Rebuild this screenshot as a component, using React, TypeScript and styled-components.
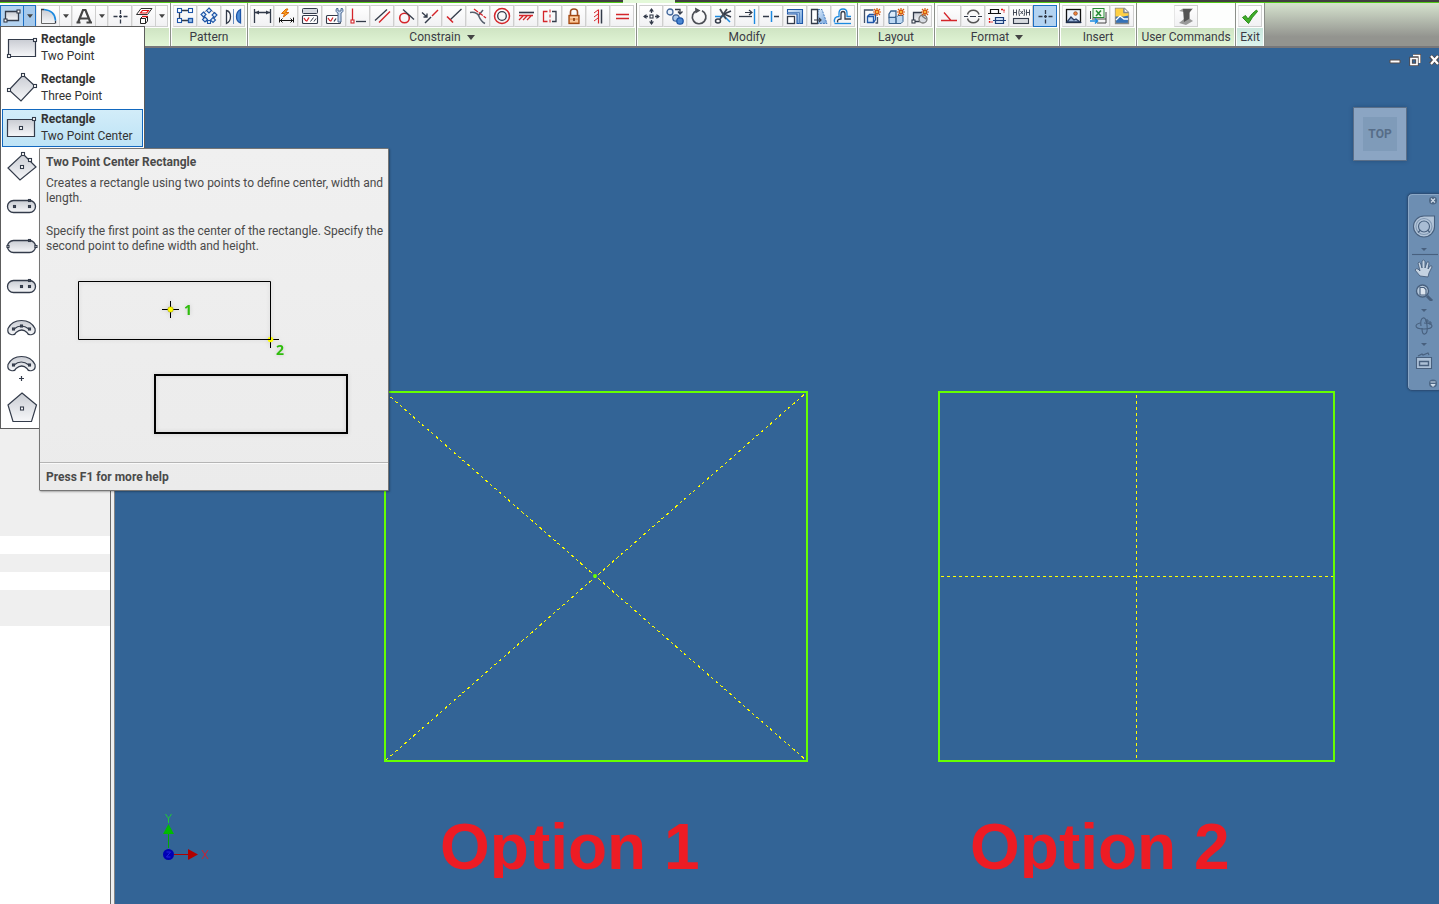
import React from 'react';
import styled, { createGlobalStyle, css } from 'styled-components';

const INK = '#333b4a';
const RED = '#d4252a';
const BLUE = '#1e56a8';
const SKY = '#1c8ae0';

const GlobalStyle = createGlobalStyle`
  * { box-sizing: border-box; }
  body { margin: 0; background: #336496; font-family: Roboto, "Open Sans", sans-serif; font-size: 12px; color: #333; }
  button { font: inherit; color: inherit; padding: 0; margin: 0; border: 0; background: none; cursor: pointer; }
  svg { display: block; }
`;

const Page = styled.div`
  display: flex;
  flex-direction: column;
  min-height: 100vh;
  overflow: hidden;
`;

/* ---------- ribbon ---------- */

const Ribbon = styled.header`
  position: relative;
  z-index: 2;
  background: linear-gradient(#dcead4, #93948f 80%);
  border-bottom: 2px solid #77777a;
`;

const TabStrip = styled.div`
  display: flex;
  height: 3px;
`;

const TabEdge = styled.div<{ $width?: number }>`
  flex: ${p => (p.$width ? `0 0 ${p.$width}px` : '1')};
  background: #41403f;
  border-bottom: 1px solid #52c818;
`;

const ActiveTab = styled.div`
  width: 52px;
  background: #e3f8d8;
`;

const Panels = styled.div`
  display: flex;
  height: 43px;
`;

const Panel = styled.section<{ $flush?: boolean }>`
  position: relative;
  display: flex;
  flex-direction: column;
  border-right: 1px solid #8b8f89;
  background: #fdfefd;
  ${p => p.$flush && css`
    & > div { padding-left: 0; }
  `}
`;

const Tools = styled.div`
  display: flex;
  justify-content: center;
  height: 25px;
  padding: 2px 2px 1px;
`;

const PanelTitle = styled.div<{ $exit?: boolean }>`
  display: flex;
  align-items: center;
  justify-content: center;
  gap: 6px;
  height: 18px;
  margin: 0 1px;
  line-height: 18px;
  white-space: nowrap;
  color: #3b3b45;
  background: ${p => (p.$exit ? 'linear-gradient(#c9e6dc, #dcf4ee)' : 'linear-gradient(#cfe4c3, #e2f6d6)')};
`;

const CommandsTitle = styled(PanelTitle)`
  width: 96px;
`;

const Tool = styled.button<{ $on?: boolean }>`
  width: 24px;
  height: 22px;
  flex: none;
  border: 1px solid ${p => (p.$on ? '#1c6fc4' : '#cfcfcf')};
  border-left-color: ${p => (p.$on ? '#1c6fc4' : '#e6e6e6')};
  background: ${p => (p.$on ? '#b3d3f1' : 'linear-gradient(#fff, #f1f1f3)')};
  svg { margin: -1px; }
`;

const SplitArrow = styled.button<{ $on?: boolean }>`
  display: grid;
  place-items: center;
  width: 12px;
  height: 22px;
  flex: none;
  border: 1px solid ${p => (p.$on ? '#1c6fc4' : '#cfcfcf')};
  border-left: 0;
  background: ${p => (p.$on ? '#a5c9ec' : 'linear-gradient(#fff, #f1f1f3)')};
`;

const Caret = ({ size = 6 }: { size?: number }) => (
  <svg width={size} height={size / 2 + 1} viewBox="0 0 8 5"><path d="M0 0h8L4 5z" fill="#444" /></svg>
);

const Icon = ({ children }: { children: React.ReactNode }) => (
  <svg width="24" height="22" viewBox="0 0 24 22" fill="none" stroke={INK} strokeWidth="1.3">{children}</svg>
);

const Dot = ({ x, y, c = INK, s = 3 }: { x: number; y: number; c?: string; s?: number }) => (
  <rect x={x - s / 2} y={y - s / 2} width={s} height={s} fill="#fff" stroke={c} strokeWidth="1.1" />
);

const Spark = ({ x = 17, y = 7 }: { x?: number; y?: number }) => (
  <g stroke="#d65a10" strokeWidth="1.2">
    <path d={`M${x - 4} ${y}h8M${x} ${y - 4}v8M${x - 3} ${y - 3}l6 6M${x + 3} ${y - 3}l-6 6`} />
    <circle cx={x} cy={y} r="1.6" fill="#ffd34d" />
  </g>
);

const Shade = () => (
  <svg width="0" height="0" style={{ position: 'absolute' }} aria-hidden="true">
    <defs>
      <linearGradient id="shade" x1="0" y1="0" x2="0" y2="1">
        <stop offset="0" stopColor="#c9ccd3" /><stop offset="1" stopColor="#f6f7f9" />
      </linearGradient>
      <linearGradient id="blue" x1="0" y1="0" x2="1" y2="1">
        <stop offset="0" stopColor="#dcebfa" /><stop offset="1" stopColor="#6fa2dc" />
      </linearGradient>
    </defs>
  </svg>
);

const crosshair = <path d="M5.5 11.5h4M11 11.5h3M15.5 11.5h4M12.5 5v4M12.5 10v3M12.5 14.5v4" />;

const rectangleIcon = <><path d="M5.5 15.5v-9h13v9z" fill="url(#shade)" /><Dot x={18.5} y={6.5} /><Dot x={5.5} y={15.5} /></>;
const filletIcon = <><path d="M5 4.500h3q11 1 11 14H5z" fill="url(#shade)" stroke="none" /><path d="M5.500 4v14.500H19" strokeWidth="1" stroke="#666" /><path d="M5 4.500h3M19.500 18.500v-3" /><path d="M8 4.500q11 1 11.500 11" stroke={SKY} strokeWidth="1.600" /></>;
const textIcon = <path d="M6 17.500L11 5h2.500l5 12.500M8.500 13.500h7.500M4.500 17.500h4M14.500 17.500h5.500" stroke="#444" strokeWidth="2.200" />;
const projectIcon = <><path d="M9 3.500h11l-4.500 6H4.500z" fill="#fff" stroke="#333" strokeWidth="1" /><path d="M10.500 5.500h6l-2 2.500H8.500z" stroke="#e01010" strokeWidth="1.200" /><path d="M8.500 13.500l2-2h5v4.500l-2 2.500h-5zM8.500 13.500h5v5M13.500 13.500l2-2" stroke="#222" strokeWidth="1" fill="#fff" /><path d="M10 11.500h5.500" stroke="#e01010" /></>;

const patternTools: [string, React.ReactNode][] = [
  ['Rectangular Pattern', <><path d="M8 5.500h9M8 15.500h9M6.500 8v6" /><Dot x={6.5} y={5.5} c={BLUE} s={4} /><Dot x={17.500} y={5.5} c={BLUE} s={4} /><Dot x={6.5} y={15.5} c={BLUE} s={4} /><rect x="15.500" y="13.500" width="4" height="4" fill="#9cc3ee" stroke={BLUE} /></>],
  ['Circular Pattern', <><circle cx="12" cy="11" r="6" stroke="#889" strokeWidth="1" /><g fill="#dcebfa" stroke={BLUE} strokeWidth="1.100"><path d="M12 3l2.500 2.500L12 8 9.500 5.500zM6.500 7L9 9.500 6.500 12 4 9.500zM17.500 7.500L20 10l-2.500 2.500L15 10zM8 12l2.500 2.500L8 17l-2.500-2.500zM16 12.500l2.500 2.500-2.500 2.500-2.500-2.500zM10.500 15.500h3v3h-3z" /></g></>],
  ['Mirror', <><path d="M5.500 5.500q4 1 4 6t-4 7z" fill="#fff" /><path d="M12.500 4v15" stroke="#6a8fc0" strokeWidth="1" /><path d="M19.500 4.500q-4 2-4 7t4 6.500z" fill="#4f8fd8" stroke={BLUE} /></>],
];

const constrainTools: [string, React.ReactNode][] = [
  ['Dimension', <><path d="M4.500 4v14M20.500 4v14M5 7.500h15" /><path d="M5 7.500l4-2v4zM20 7.500l-4-2v4z" fill={INK} stroke="none" /></>],
  ['Automatic Dimensions', <><path d="M12 4L7.500 8.500h3L9.500 12 15 7.500h-3.500L14 4z" fill="#ffa41c" stroke="#d9680c" strokeWidth="1" /><path d="M5.500 12.500v5M19.500 12.500v5M6 15.500h13M8.500 13.500l-2 2 2 2M16.500 13.500l2 2-2 2" stroke="#111" strokeWidth="1" /></>],
  ['Show Constraints', <><rect x="4.500" y="3.500" width="15" height="5" rx="1" fill="#d6dae1" strokeWidth="1" /><rect x="4.500" y="10.500" width="15" height="8" rx="1" fill="#fff" strokeWidth="1.100" /><path d="M6 13l2 3M11 12.500L8.500 16.500" stroke={RED} /><path d="M12.500 16.500l3-4M16 16.500l2-3" strokeWidth="1" /></>],
  ['Constraint Settings', <><rect x="4.500" y="10.500" width="14" height="8" rx="1" fill="#fff" strokeWidth="1.100" /><path d="M6 13l2 3M11 12.500L8.500 16.500" stroke={RED} /><path d="M12 16.500l2-3" /><path d="M16 17V8q-3-1-1.500-4.500h1.500V6h3V3.500h1.500Q22 7 19 8v9z" fill="#c5d7ed" stroke="#4c6a94" strokeWidth="1" /></>],
  ['Coincident', <><path d="M6.500 3.500V15" stroke={RED} /><path d="M10 16.500h10" /><Dot x={6.5} y={16.5} c={RED} /></>],
  ['Parallel', <><path d="M5 15.500L17 4.500" /><path d="M9 17.500L20 6.500" stroke={RED} strokeWidth="1.500" /></>],
  ['Tangent', <><circle cx="10.500" cy="13" r="4.800" stroke={RED} strokeWidth="1.600" /><path d="M9 4.500l11 10" /></>],
  ['Collinear', <><path d="M4 7.500l5 4.500M9 8.500V12H5.500" /><path d="M7 18l6-6" strokeWidth="1.500" /><path d="M14 11l6-6" stroke={RED} strokeWidth="1.500" /></>],
  ['Perpendicular', <><path d="M19.500 4L8 15" /><path d="M5 11.500l6 6" stroke={RED} strokeWidth="1.600" /></>],
  ['Smooth', <><path d="M4 7.500q7-1 9 4t6 7M13 10l4-5" stroke="#555e6c" strokeWidth="1.500" /><path d="M8 4l12 9" stroke={RED} strokeWidth="1.300" strokeDasharray="5 1" /></>],
  ['Concentric', <><circle cx="12" cy="11" r="7.500" stroke={RED} strokeWidth="1.500" /><circle cx="12" cy="11" r="4.300" /></>],
  ['Horizontal', <><path d="M5 7.500h15" strokeWidth="1.600" /><path d="M5 10.500h14M9 11l-4 4M13 11l-4 4M17 11l-4 4" stroke={RED} /></>],
  ['Symmetric', <><path d="M9.500 6.500h-4v10h4" stroke={RED} /><path d="M14 6.500h4v10h-4" /><path d="M12 4.500v14" stroke={RED} strokeDasharray="3 2" strokeWidth="1" /></>],
  ['Fix', <><path d="M8.500 10V7q0-3 3.500-3t3.500 3v3" stroke="#9d4b20" strokeWidth="1.600" /><rect x="7" y="10.500" width="10" height="8" fill="#eca56b" stroke="#a34812" /><path d="M8 12.500h8M8 16h8" stroke="#fbd4ae" /><path d="M12 13v3" stroke="#7b2f08" strokeWidth="1.500" /></>],
  ['Vertical', <><path d="M12.500 4.500v14" stroke={RED} strokeWidth="1.200" /><path d="M12 5L8 8M12 9l-4 3M12 13l-4 3" stroke={RED} strokeWidth="1" /><path d="M15.500 4.500v14" strokeWidth="1.500" /></>],
  ['Equal', <path d="M6 9.500h13M6 13.500h13" stroke={RED} strokeWidth="1.400" />],
];

const modifyTools: [string, React.ReactNode][] = [
  ['Move', <><path d="M5 11.500h4M16 11.500h4M12.500 4v4M12.500 15v4" /><path d="M4 11.500l3.500-2.500v5zM21 11.500l-3.500-2.500v5zM12.500 3l-2.500 3.500h5zM12.500 20l-2.500-3.500h5z" fill={INK} stroke="none" /><Dot x={12.5} y={11.5} s={3} /></>],
  ['Copy', <><circle cx="7" cy="7" r="3" fill="#e6f0fb" stroke="#42669a" /><path d="M12 4.500h5v4M15 6.500l2 2.500 2.500-2.500" /><circle cx="13" cy="13" r="3.200" fill="#acc9eb" stroke="#42669a" /><circle cx="17" cy="16" r="3.200" fill="#4a87d2" stroke={BLUE} /></>],
  ['Rotate', <><path d="M10 5.500a6.800 6.800 0 1 0 5 .3" stroke="#4c4f56" strokeWidth="1.700" /><path d="M8 2.500l5.500 3-5 3z" fill="#4c4f56" stroke="none" /></>],
  ['Trim', <><path d="M4 11.500h10M14 12l5 5" stroke={SKY} strokeWidth="1.500" /><path d="M9 4l6 10M16 4L9 14" strokeWidth="1.800" stroke="#454b56" /><ellipse cx="7" cy="16" rx="2.500" ry="2" strokeWidth="1.500" /><path d="M13 9l7 3M13 9l7-3" strokeWidth="1.500" /></>],
  ['Extend', <><path d="M4 11.500h13" /><path d="M10 7.500h7M14 5l3 2.500-3 2.500" strokeWidth="1.200" /><path d="M19.500 4v15" stroke={SKY} strokeWidth="1.400" /></>],
  ['Split', <><path d="M4 11.500h6M15 11.500h5" /><path d="M12.500 6v11" stroke={SKY} strokeWidth="1.500" /></>],
  ['Scale', <><path d="M4.500 9V4.500h15v14H14v-9.500z" fill="url(#blue)" stroke={BLUE} strokeWidth="1.100" /><path d="M4.500 7.500h12v11" stroke="#5c88c0" strokeWidth="1" /><rect x="4.500" y="11.500" width="7" height="7" fill="#fff" /></>],
  ['Stretch', <><path d="M11 4.500h4l5 14h-9z" fill="url(#blue)" stroke="#4a7fc0" strokeDasharray="2 1" strokeWidth="1" /><path d="M4.500 4.500h6v14h-6z" fill="#fff" strokeWidth="1.300" /><path d="M7 15h7M12 13l2 2-2 2" strokeWidth="1.200" /></>],
  ['Offset', <><path d="M3.500 17.500q-1-6 4.500-6V8q0-4 4-4t4 4v3.500h4" stroke={SKY} strokeWidth="1.300" /><path d="M7 17.500q-2-3 3-3.500V9q0-2.500 2-2.500t2 2.500v5h6" /><path d="M3.500 18.500H20" stroke={SKY} /></>],
];

const layoutTools: [string, React.ReactNode][] = [
  ['Make Part', <><path d="M4.500 18V5h9M17.500 12v6h-2" stroke="#42516a" /><path d="M7.500 11.500l2-2h6v5l-2 3h-6z" fill="#dcebfa" stroke={BLUE} /><path d="M7.500 11.500h6v6" stroke={BLUE} /><Spark /></>],
  ['Make Components', <><path d="M5 9l2-3h5v5l-1 1.500H5z" fill="#dcebfa" stroke="#35608f" /><path d="M5 12.500h7v6H5zM12 12.500l2-2h5v6l-2 2h-5z" fill="#bcd8f3" stroke="#35608f" strokeWidth="1" /><Spark /></>],
  ['Create Block', <><path d="M14 7.500H5.500v9H12" fill="url(#shade)" /><Dot x={5.5} y={16.5} /><circle cx="15" cy="14" r="4" fill="#d7dbe2" stroke="#777" /><path d="M14 11l4 3" stroke="#777" /><Spark /></>],
];

const formatTools: [string, React.ReactNode][] = [
  ['Construction', <path d="M4 15.500h16M7 7.500l7 8" stroke={RED} />],
  ['Centerline', <><path d="M6.500 9.500a6 6 0 0 1 11.500 0M6.500 13.500a6 6 0 0 0 11.500 0" strokeWidth="1.500" stroke="#555" /><path d="M3 11.500h4M9 11.500h6M17 11.500h4" strokeWidth="1.100" /></>],
  ['Sketch Only', <><path d="M5.500 4.500h8v4h-8zM3 8.500h13" stroke="#111" strokeWidth="1.200" /><path d="M10.500 12.500h8v6h-8zM8 15.500h13" stroke="#1c3f7a" strokeWidth="1.200" fill="#cddff5" /><path d="M16 4.500h3V8M4.500 13v4h3" stroke="#e01010" strokeDasharray="2 1" /></>],
  ['Driven Dimension', <><path d="M4.500 4.500v6M7.500 4.500v6M4.500 7.500h3M10.500 4q-1.500 3.500 0 7M11.500 6l2.500 3M14 6l-2.500 3M15 4q1.500 3.500 0 7M17.500 4.500v6M20.500 4.500v6M17.500 7.500h3" strokeWidth=".9" /><rect x="4.500" y="13.500" width="15" height="5" fill="#d8dbe0" strokeWidth="1.100" /></>],
];

const insertTools: [string, React.ReactNode][] = [
  ['Image', <><rect x="4.500" y="4.500" width="14" height="13" fill="#eef4fc" stroke="#111" /><path d="M5 17l4-5 3 3 2-1 4 3z" fill="#9eb6d8" stroke="#283d64" /><circle cx="13.500" cy="8.500" r="1.800" fill="#f2823c" stroke="#8a4d28" strokeWidth=".8" /></>],
  ['Import Points', <><path d="M6 14h14M11 18h9M20 7v11M4.500 6v8" stroke="#444" strokeWidth="1" /><rect x="7" y="3.500" width="11" height="9" fill="#f2faf0" stroke="#268a36" strokeWidth="1" /><path d="M10 5.500l5 5.500M15 5.500L10 11" stroke="#268a36" strokeWidth="1.600" /><path d="M4 16h7M9 13.500l2.500 2.500L9 18.500" stroke={SKY} strokeWidth="1.500" /></>],
  ['ACAD', <><path d="M5.500 3.500h9l4 4v11h-13z" fill="#3471b8" stroke="#888" /><path d="M5.500 3.500h8v4h5v3l-5 1-8 0z" fill="#ffd044" stroke="none" /><path d="M14 3.500v4h4.500" fill="#fff" stroke="#888" /><path d="M6 15l4-4 4 3h4" stroke="#fff" /></>],
];

const ToolButtons = ({ tools }: { tools: [string, React.ReactNode][] }) => (
  <Tools>
    {tools.map(([name, art]) => <Tool key={name} type="button" aria-label={name}><Icon>{art}</Icon></Tool>)}
  </Tools>
);

/* ---------- rectangle menu ---------- */

const Menu = styled.div`
  position: absolute;
  top: 23px;
  left: 0;
  z-index: 3;
  width: 145px;
  border: 1px solid #5d5d5d;
  background: #fff;
  && { padding: 2px 1px 0; }
`;

const MenuItem = styled.button<{ $on?: boolean }>`
  display: flex;
  align-items: center;
  gap: 2px;
  width: 141px;
  height: 38px;
  margin-bottom: 2px;
  text-align: left;
  line-height: 17px;
  white-space: nowrap;
  outline: ${p => (p.$on ? '1px solid #1268bf' : '0')};
  outline-offset: -1px;
  background: ${p => (p.$on ? 'linear-gradient(#d3edf9, #bde3f6)' : 'none')};
  svg { flex: none; }
  &:last-child { margin-bottom: 1px; }
`;

const MenuName = styled.strong`
  display: block;
`;

const MenuIcon = ({ children }: { children: React.ReactNode }) => (
  <svg width="37" height="38" viewBox="1 0 37 38" fill="url(#shade)" stroke={INK} strokeWidth="1.200">{children}</svg>
);

const slot = <rect x="5.500" y="11.500" width="28" height="12" rx="6" strokeWidth="1.300" />;
const arcSlot = <path d="M9 25.500q-4-1-3-6 4-8 13.500-8t13.500 8q1 5-3 6-4 1-5-2-5-5-11 0-1 3-5 2z" />;

const menuItems: { name: string; kind?: string; art: React.ReactNode }[] = [
  { name: 'Two Point', kind: 'Rectangle', art: <><path d="M7.500 10.500h27v17h-27z" /><Dot x={34} y={11} /><Dot x={8} y={27} /></> },
  { name: 'Three Point', kind: 'Rectangle', art: <><path d="M22 6L34 17 20 32 8 21z" /><Dot x={22} y={6} /><Dot x={34} y={17} /><Dot x={8} y={21} /></> },
  { name: 'Two Point Center', kind: 'Rectangle', art: <><path d="M6.500 10.500h27v17h-27z" /><Dot x={33} y={10} /><Dot x={20} y={19} /></> },
  { name: 'Three Point Center', art: <><path d="M22 5L35 18 19 31 7 19z" /><Dot x={22} y={5} /><Dot x={29} y={11} /><Dot x={21} y={18} /></> },
  { name: 'Slot Center to Center', art: <g transform="translate(1 0)">{slot}<Dot x={12.5} y={17.5} s={2} /><Dot x={27.5} y={17.5} s={2} /><Dot x={27.5} y={11.5} s={2} /></g> },
  { name: 'Slot Overall', art: <g transform="translate(1 0)">{slot}<Dot x={6} y={17.500} s={2} /><Dot x={34} y={17.500} s={2} /><Dot x={27.5} y={11.5} s={2} /></g> },
  { name: 'Slot Center Point', art: <g transform="translate(1 0)">{slot}<Dot x={19.5} y={17.5} s={2} /><Dot x={27.5} y={17.5} s={2} /><Dot x={27.5} y={11.5} s={2} /></g> },
  { name: 'Slot Three Point Arc', art: <g transform="translate(1 0)">{arcSlot}<path d="M12 20q7-6 15 0" fill="none" /><Dot x={11.5} y={20} s={2} /><Dot x={19.5} y={17} s={2} /><Dot x={27.5} y={20} s={2} /></g> },
  { name: 'Slot Center Point Arc', art: <g transform="translate(1 -4)">{arcSlot}<path d="M12 20q7-6 15 0" fill="none" /><Dot x={11.5} y={20} s={2} /><Dot x={27.5} y={20} s={2} /><path d="M19.500 31v5M17 33.500h5" /></g> },
  { name: 'Polygon', art: <><path d="M21 4L35.500 16 30.500 32.500H12L7 16z" /><Dot x={21} y={19.5} /></> },
];

const Tooltip = styled.aside`
  position: absolute;
  top: 145px;
  left: 39px;
  z-index: 4;
  display: flex;
  flex-direction: column;
  width: 350px;
  height: 343px;
  color: #4a4a4a;
  background: linear-gradient(#f0f0f0, #ebebeb);
  border: 1px solid #767676;
  border-radius: 1px;
  box-shadow: 1px 1px 2px rgba(0, 0, 0, .3);
  line-height: 15px;
`;

const TooltipBody = styled.div`
  flex: 1;
  padding: 6px;
  white-space: nowrap;
`;

const TooltipTitle = styled.h2`
  margin: 0 0 6px;
  font-size: 12px;
  line-height: 15px;
`;

const TooltipText = styled.p`
  margin: 0 0 18px;
`;

const TooltipFooter = styled.footer`
  height: 28px;
  padding: 0 6px;
  border-top: 1px solid #b5b5b5;
  box-shadow: inset 0 1px #fafafa;
  line-height: 28px;
  font-weight: bold;
`;

const Figure = styled.svg`
  margin-left: -6px;
  filter: drop-shadow(0 0 2px rgba(0, 0, 0, .15));
`;

const RectangleTip = () => (
  <Tooltip role="tooltip">
    <TooltipBody>
      <TooltipTitle>Two Point Center Rectangle</TooltipTitle>
      <TooltipText>Creates a rectangle using two points to define center, width and<br />length.</TooltipText>
      <TooltipText>Specify the first point as the center of the rectangle. Specify the<br />second point to define width and height.</TooltipText>
      <Figure width="348" height="174" viewBox="40 272 348 174" fill="none" stroke="#000">
        <path d="M78.500 281.500h192v58h-192z" />
        <path d="M162 309.500h17M170.500 301v17M271 339.500h8M270.500 331v17" />
        <circle cx="170.500" cy="309.500" r="2.800" fill="#ff0" stroke="#776f00" strokeWidth=".4" />
        <circle cx="270.500" cy="339.500" r="2.800" fill="#ff0" stroke="none" />
        <path d="M270.500 336v4M267 339.500h4" />
        <path d="M155 375h192v58H155z" strokeWidth="2" />
        <g fill="#2fbd0c" stroke="none" fontWeight="700" fontSize="14" fontFamily="Open Sans, sans-serif">
          <text x="184" y="315">1</text><text x="276" y="355">2</text>
        </g>
      </Figure>
    </TooltipBody>
    <TooltipFooter>Press F1 for more help</TooltipFooter>
  </Tooltip>
);

/* ---------- workspace ---------- */

const Workspace = styled.main`
  display: flex;
  flex: 1;
`;

const Browser = styled.aside`
  display: flex;
  flex-direction: column;
  width: 115px;
  flex: none;
  background: #fff;
  border-right: 1px solid #858585;
  box-shadow: inset -3px 0 #efefef, inset -4px 0 #686868;
`;

const Band = styled.div<{ $h: number; $white?: boolean }>`
  height: ${p => p.$h}px;
  margin-right: 4px;
  background: ${p => (p.$white ? '#fff' : '#efefef')};
`;

const Canvas = styled.div`
  position: relative;
  flex: 1;
  min-width: 0;
  overflow: hidden;
  background: #336496;
`;

const Sketch = styled.svg`
  position: absolute;
  top: 0;
  left: 0;
  width: 100%;
  height: 100%;
`;

const OptionLabel = styled.h1<{ $x: number }>`
  position: absolute;
  left: ${p => p.$x}px;
  top: 763px;
  height: 67px;
  margin: 0;
  overflow: hidden;
  color: #ed1c24;
  font: bold 64px/72px "Liberation Sans", Arial, sans-serif;
  white-space: nowrap;
`;

const WindowControls = styled.div`
  position: absolute;
  top: 6px;
  right: -2px;
  display: flex;
  gap: 8px;
`;

const WindowButton = styled.button`
  width: 12px;
  height: 12px;
`;

const ViewCube = styled.button`
  position: absolute;
  top: 59px;
  right: 32px;
  display: grid;
  place-items: center;
  width: 54px;
  height: 54px;
  background: #8ba5c3;
  border: 1px solid #5b6f88;
  box-shadow: 0 0 4px rgba(20, 45, 80, .4);
`;

const CubeFace = styled.span`
  width: 34px;
  height: 34px;
  line-height: 34px;
  background: #7f9bb9;
  color: #566d88;
  font-weight: bold;
`;

const NavBar = styled.nav`
  position: absolute;
  top: 145px;
  right: -4px;
  display: flex;
  flex-direction: column;
  width: 36px;
  height: 198px;
  background: #6d8eb2;
  border: 1px solid #2c4f79;
  border-radius: 5px;
  box-shadow: inset 1px 1px #8ba7c5, 0 0 2px #23456c;
`;

const NavButton = styled.button<{ $h: number }>`
  height: ${p => p.$h}px;
  width: 32px;
`;

const NavIcon = ({ h, children }: { h: number; children: React.ReactNode }) => (
  <svg width="32" height={h} viewBox={`0 0 32 ${h}`} fill="none" stroke="#48607e" strokeWidth="1.100">{children}</svg>
);

const navItems: [string, number, React.ReactNode][] = [
  ['Close', 15, <><circle cx="25" cy="6.500" r="4" fill="#4d6785" stroke="none" /><path d="M23 4.500l4 4M27 4.500l-4 4" stroke="#d3dfec" /></>],
  ['Steering Wheel', 35, <><path d="M16 7h10.500V17.500A10.500 10.500 0 1 1 16 7z" fill="#b3c5d9" /><circle cx="16" cy="17.500" r="8" stroke="#8198b3" /><circle cx="16" cy="17.500" r="5.500" fill="#a9bdd4" /><path d="M10 23.500l2.500-2.500M22 23.500l-2.500-2.500" /></>],
  ['Steering Wheel Options', 12, <><path d="M13 4h6l-3 3z" fill="#48607e" stroke="none" /><path d="M4 10.500h26" /></>],
  ['Pan', 25, <path d="M12 20l-5-6q1-2 3-1l2 2-2-8q1-2 2.500 0l1.500 5V5q1.500-2 3 0v7l2-6q2-1 2 1l-1 6 2-3q2-1 2 1l-3 6-1 4z" fill="#c4d2e1" strokeWidth=".9" />],
  ['Zoom', 20, <><path d="M19 15l5 5" strokeWidth="3" /><circle cx="14.500" cy="10" r="6" fill="#b7c9dc" strokeWidth="1.400" /><path d="M12 6.500h4l2 2V14h-6z" fill="#dce5ef" /></>],
  ['Zoom Options', 11, <path d="M13 8h6l-3 3z" fill="#48607e" stroke="none" />],
  ['Orbit', 24, <><path d="M12 11q-4 1-4 3 0 3 8 3t8-3q0-3-8-3" /><path d="M14 16q0 7 3 6 3-1 2-9t-4-7q-3 1-2 8" /><path d="M19 7v4M17 9h4M22 9v4M20 11h4" /></>],
  ['Orbit Options', 10, <path d="M13 7h6l-3 3z" fill="#48607e" stroke="none" />],
  ['Look At', 30, <><path d="M8.500 11.500h15v11h-15z" fill="#adc1d7" /><path d="M11.500 15.500h9v4h-9z" strokeWidth="1.400" /><path d="M10 10l4-2 1 1 5-2 1 2" /></>],
  ['Customize', 14, <><circle cx="25" cy="7.500" r="4" fill="#4d6785" stroke="none" /><path d="M22.500 6h5M23 8.500h4l-2 2z" fill="#d3dfec" stroke="#d3dfec" strokeWidth="1" /></>],
];

export default function App() {
  return (
    <Page>
      <GlobalStyle />
      <Shade />
      <Ribbon>
        <TabStrip><TabEdge $width={623} /><ActiveTab /><TabEdge /></TabStrip>
        <Panels>
          <Panel $flush>
            <Tools>
              <Tool $on type="button" aria-label="Rectangle"><Icon>{rectangleIcon}</Icon></Tool>
              <SplitArrow $on type="button" aria-label="Rectangle types"><Caret /></SplitArrow>
              <Tool type="button" aria-label="Fillet"><Icon>{filletIcon}</Icon></Tool>
              <SplitArrow type="button" aria-label="Fillet types"><Caret /></SplitArrow>
              <Tool type="button" aria-label="Text"><Icon>{textIcon}</Icon></Tool>
              <SplitArrow type="button" aria-label="Text types"><Caret /></SplitArrow>
              <Tool type="button" aria-label="Point"><Icon>{crosshair}</Icon></Tool>
              <Tool type="button" aria-label="Project Geometry"><Icon>{projectIcon}</Icon></Tool>
              <SplitArrow type="button" aria-label="Project types"><Caret /></SplitArrow>
            </Tools>
            <PanelTitle />
            <Menu role="menu">
              {menuItems.map(({ name, kind, art }) => (
                <MenuItem key={name} type="button" role="menuitem" aria-label={kind ? undefined : name} $on={name === 'Two Point Center'}>
                  <MenuIcon>{art}</MenuIcon>
                  {kind && <span><MenuName>{kind}</MenuName>{name}</span>}
                </MenuItem>
              ))}
            </Menu>
            <RectangleTip />
          </Panel>
          <Panel><ToolButtons tools={patternTools} /><PanelTitle>Pattern</PanelTitle></Panel>
          <Panel><ToolButtons tools={constrainTools} /><PanelTitle>Constrain <Caret size={8} /></PanelTitle></Panel>
          <Panel><ToolButtons tools={modifyTools} /><PanelTitle>Modify</PanelTitle></Panel>
          <Panel><ToolButtons tools={layoutTools} /><PanelTitle>Layout</PanelTitle></Panel>
          <Panel>
            <Tools>
              {formatTools.map(([name, art]) => <Tool key={name} type="button" aria-label={name}><Icon>{art}</Icon></Tool>)}
              <Tool $on type="button" aria-label="Center Point"><Icon>{crosshair}</Icon></Tool>
            </Tools>
            <PanelTitle>Format <Caret size={8} /></PanelTitle>
          </Panel>
          <Panel><ToolButtons tools={insertTools} /><PanelTitle>Insert</PanelTitle></Panel>
          <Panel>
            <ToolButtons tools={[['User Command', <><path d="M5 6l4-2.500h10L16 7v7l3 2-7 4-7-2 5-4V7z" fill="#999" stroke="none" /><path d="M9 4h9L15 8v6l-5 3z" fill="#555" stroke="none" /></>]]} />
            <CommandsTitle>User Commands</CommandsTitle>
          </Panel>
          <Panel>
            <ToolButtons tools={[['Finish Sketch', <path d="M4.500 12.500l3-2 2.500 3.500Q14 8 18.500 5l1 1.500Q14 12 10.500 18.500z" fill="#3fae29" stroke="#2a8a1a" strokeWidth="1" />]]} />
            <PanelTitle $exit>Exit</PanelTitle>
          </Panel>
        </Panels>
      </Ribbon>

      <Workspace>
        <Browser>
          <Band $h={488} /><Band $h={18} $white /><Band $h={18} /><Band $h={18} $white /><Band $h={36} />
        </Browser>
        <Canvas>
          <Sketch fill="none">
            <g transform="translate(-115 -48)">
              <g stroke="#ff0" shapeRendering="crispEdges" strokeDasharray="3 3">
                <path d="M386 393L807 761M386 760L807 392" />
                <path d="M1136.500 395v366M941 576.500h393" />
              </g>
              <path d="M385 392h422v369H385zM939 392h395v369H939z" stroke="#6f0" strokeWidth="2" />
              <circle cx="595" cy="576" r="2" fill="#6f0" />
              <path d="M168.500 848v-14" stroke="#0a0" /><path d="M163 834l5.500-10 5.500 10z" fill="#0b0" />
              <path d="M174 854.500h15" stroke="#b00000" /><path d="M188 849l10 5.500-10 5.500z" fill="#b00000" />
              <circle cx="168.500" cy="854.500" r="5.500" fill="#0000b4" />
              <path d="M166.500 852h4l-4 5h4" stroke="#2222e0" />
              <path d="M165.500 814l3 4.500 3-4.500M168.500 818v5" stroke="#1fc838" />
              <path d="M202 850l6 9M208 850l-6 9" stroke="#d02030" />
            </g>
          </Sketch>
          <OptionLabel $x={325}>Option 1</OptionLabel>
          <OptionLabel $x={855}>Option 2</OptionLabel>
          <WindowControls>
            <WindowButton type="button" aria-label="Minimize"><svg width="12" height="12"><path d="M1 6h10v3H1z" fill="#fff" stroke="#574d4a" /></svg></WindowButton>
            <WindowButton type="button" aria-label="Restore"><svg width="12" height="12" fill="none"><path d="M4 1.500h6.500V9M2 4.500h6v6H2z" stroke="#51494a" strokeWidth="3.400" /><path d="M4 1.500h6.500V9M2 4.500h6v6H2z" stroke="#fff" strokeWidth="1.700" /></svg></WindowButton>
            <WindowButton type="button" aria-label="Close"><svg width="12" height="12"><path d="M1.500 2l8 8M9.500 2l-8 8" stroke="#51494a" strokeWidth="4" /><path d="M2 2l7 8M9 2l-7 8" stroke="#fff" strokeWidth="2.200" /></svg></WindowButton>
          </WindowControls>
          <ViewCube type="button"><CubeFace>TOP</CubeFace></ViewCube>
          <NavBar aria-label="Navigation">
            {navItems.map(([name, h, art]) => (
              <NavButton key={name} type="button" aria-label={name} $h={h}><NavIcon h={h}>{art}</NavIcon></NavButton>
            ))}
          </NavBar>
        </Canvas>
      </Workspace>
    </Page>
  );
}
